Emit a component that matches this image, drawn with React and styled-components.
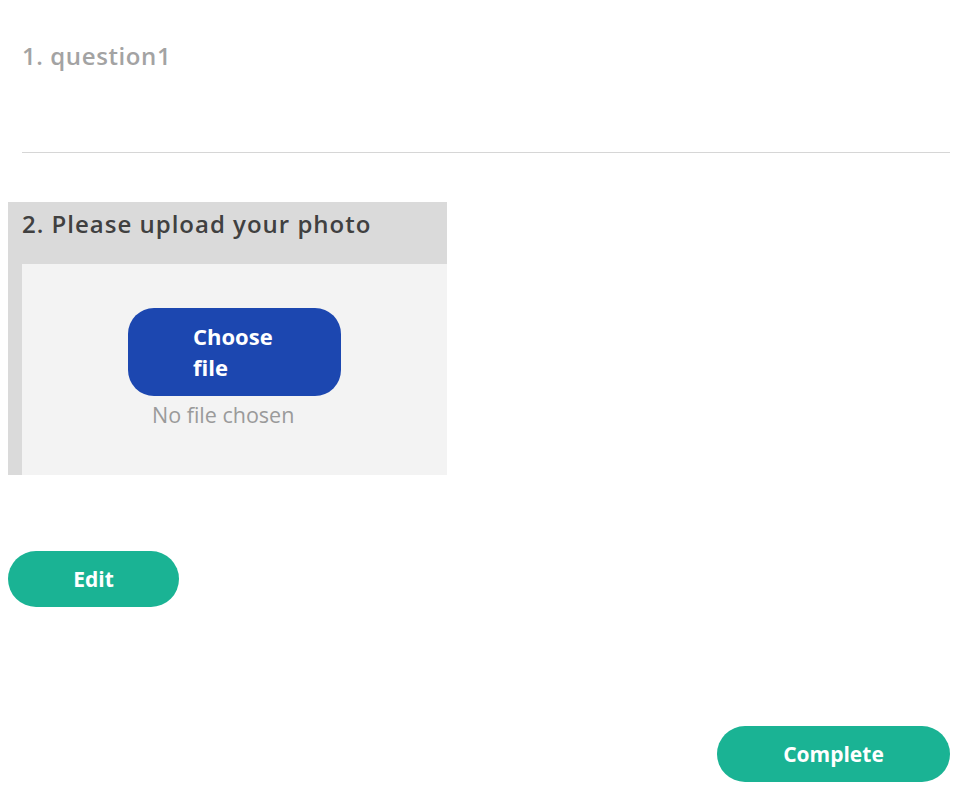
import React from "react";
import styled, { createGlobalStyle } from "styled-components";

const Global = createGlobalStyle`
  html, body { background: #ffffff; }
  body { margin: 8px; font-family: "Open Sans", "Noto Sans", sans-serif; }
  * { box-sizing: border-box; }
`;

const Page = styled.div`
  display: flex;
  flex-direction: column;
  width: 952px;
`;

const QuestionOne = styled.section`
  padding: 0 10px 0 14px;
`;

const QuestionTitle = styled.h2`
  margin: 0;
  font-family: "Open Sans", "Noto Sans", sans-serif;
  font-weight: 600;
  font-size: 24px;
  line-height: 30px;
  color: ${(p) => p.$color || "#404040"};
  letter-spacing: ${(p) => p.$spacing || "1px"};
`;

const Divider = styled.hr`
  margin: 0;
  border: none;
  border-top: 1px solid #d6d6d6;
`;

const Panel = styled.section`
  margin-top: 49px;
  width: 439px;
  background: #dadada;
  display: flex;
  flex-direction: column;
`;

const PanelHeader = styled.div`
  height: 62px;
  padding: 7px 0 0 14px;
`;

const PanelBody = styled.div`
  margin-left: 14px;
  height: 211px;
  background: #f3f3f3;
  display: flex;
  flex-direction: column;
  align-items: flex-start;
  padding: 44px 0 0 106px;
`;

const ChooseButton = styled.button`
  width: 213px;
  height: 88px;
  border: none;
  border-radius: 26px;
  background: #1c47b0;
  color: #ffffff;
  font-family: "Open Sans", "Noto Sans", sans-serif;
  font-weight: 700;
  font-size: 22px;
  line-height: 31px;
  text-align: left;
  padding: 0 0 0 65px;
  cursor: pointer;
`;

const FileStatus = styled.span`
  margin: 5px 0 0 24px;
  font-family: "Open Sans", "Noto Sans", sans-serif;
  font-weight: 400;
  font-size: 21.5px;
  line-height: 28px;
  color: #9a9a9a;
`;

const PillButton = styled.button`
  width: ${(p) => p.$width}px;
  height: 56px;
  border: none;
  border-radius: 28px;
  background: #1ab394;
  color: #ffffff;
  font-family: "Open Sans", "Noto Sans", sans-serif;
  font-weight: 700;
  font-size: 21px;
  cursor: pointer;
  align-self: ${(p) => p.$align || "flex-start"};
  margin-top: ${(p) => p.$top}px;
  margin-right: ${(p) => p.$right || 0}px;
`;

const Spacer = styled.div`
  height: ${(p) => p.$h}px;
`;

export default function App() {
  return (
    <>
      <Global />
      <Page>
        <QuestionOne>
          <Spacer $h={33} />
          <QuestionTitle $color="#a3a3a3" $spacing="0.6px">1. question1</QuestionTitle>
          <Spacer $h={81} />
          <Divider />
        </QuestionOne>
        <Panel>
          <PanelHeader>
            <QuestionTitle>2. Please upload your photo</QuestionTitle>
          </PanelHeader>
          <PanelBody>
            <ChooseButton>
              Choose
              <br />
              file
            </ChooseButton>
            <FileStatus>No file chosen</FileStatus>
          </PanelBody>
        </Panel>
        <PillButton $width={171} $top={76}>Edit</PillButton>
        <PillButton $width={233} $top={119} $align="flex-end" $right={10}>
          Complete
        </PillButton>
      </Page>
    </>
  );
}
